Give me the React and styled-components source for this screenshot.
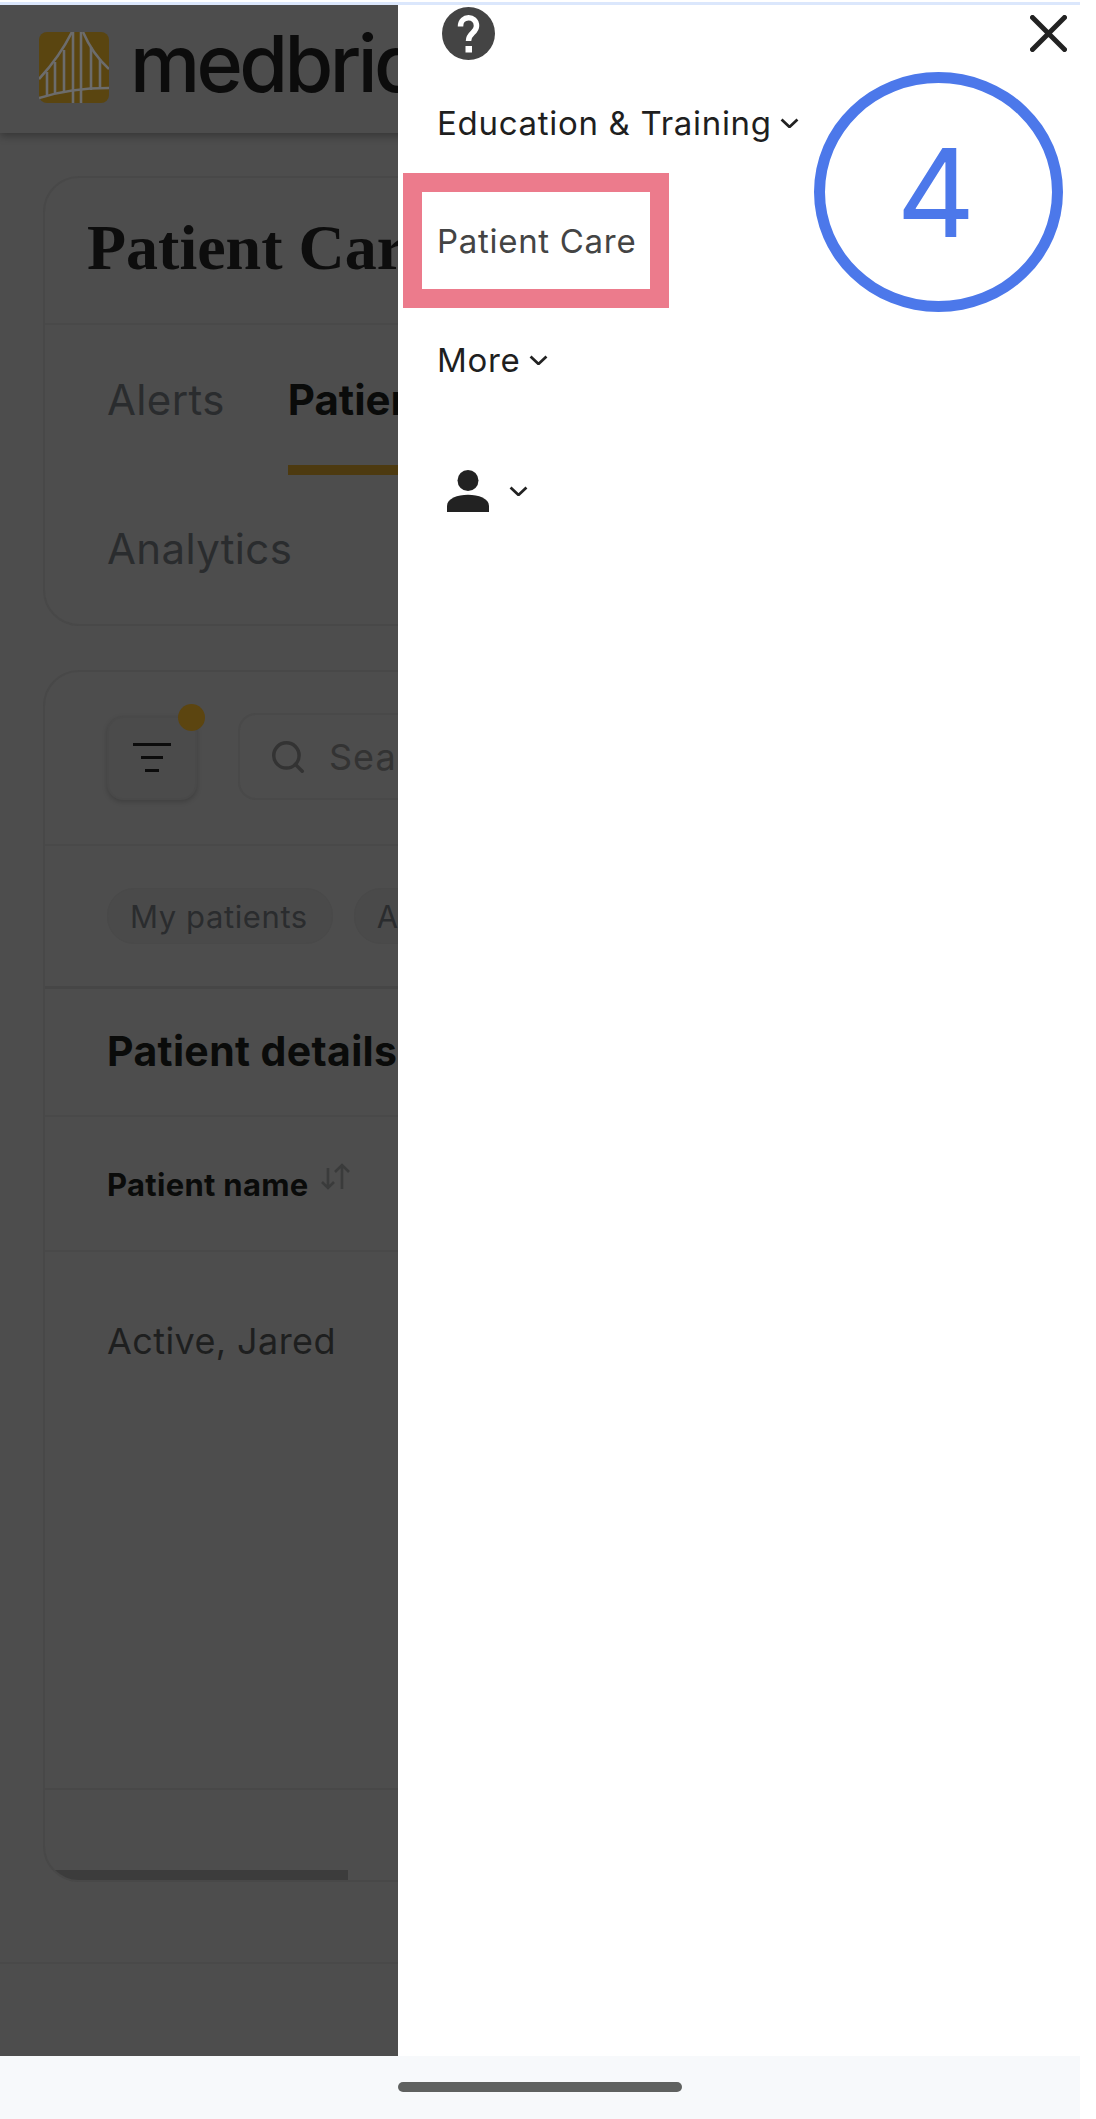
import React from "react";
import styled, { createGlobalStyle } from "styled-components";
import { Search } from "lucide-react";

const GlobalStyle = createGlobalStyle`
  html, body {
    margin: 0;
    padding: 0;
    background: #ffffff;
    font-family: Inter, "Liberation Sans", sans-serif;
  }
`;

const Frame = styled.div`
  width: 1080px;
  height: 2119px;
  padding-top: 2px;
  box-sizing: border-box;
  display: flex;
  flex-direction: column;
  background: #ffffff;
`;

const StatusLine = styled.div`
  height: 3px;
  flex: none;
  background: #dbe7fc;
`;

const Screen = styled.div`
  flex: 1;
  min-height: 0;
  display: grid;
  grid-template-columns: 398px 682px;
`;

const HomeBar = styled.div`
  height: 63px;
  flex: none;
  background: #f7f9fb;
  display: flex;
  justify-content: center;
  padding-top: 26px;
  box-sizing: border-box;
`;

const HomeHandle = styled.div`
  width: 284px;
  height: 10px;
  border-radius: 5px;
  background: #5f6160;
`;

/* page behind the open menu, already dimmed */
const Backdrop = styled.div`
  background: #4d4d4d;
  overflow: hidden;
  display: flex;
  flex-direction: column;
`;

const TopBar = styled.header`
  height: 128px;
  flex: none;
  box-sizing: border-box;
  padding: 27px 0 0 39px;
  display: flex;
  gap: 21px;
  width: 900px;
  box-shadow: 0 3px 8px rgba(0, 0, 0, 0.3);
`;

const Wordmark = styled.span`
  margin-top: -3px;
  font-size: 79px;
  font-weight: 500;
  line-height: 68px;
  letter-spacing: -3.6px;
  color: #0c0c0c;
`;

const Main = styled.main`
  flex: 1;
  width: 900px;
  padding: 43px 0 0 43px;
  box-sizing: border-box;
  display: flex;
  flex-direction: column;
  gap: 44px;
`;

const Card = styled.section`
  position: relative;
  width: 855px;
  box-sizing: border-box;
  border: 2px solid #484848;
  border-radius: 36px;
  overflow: hidden;
`;

const TitleRow = styled.div`
  height: 147px;
  box-sizing: border-box;
  padding: 0 0 6px 42px;
  display: flex;
  align-items: center;
  border-bottom: 2px solid #494949;
`;

const Title = styled.h1`
  margin: 0;
  font-family: "Liberation Serif", serif;
  font-size: 64px;
  font-weight: 700;
  color: #0d0d0d;
  white-space: nowrap;
`;

const TabRow = styled.div`
  height: ${(p) => p.$height}px;
  padding-left: 62px;
  display: flex;
  gap: 63px;
`;

const Tab = styled.div`
  box-sizing: border-box;
  padding-top: 8px;
  display: flex;
  align-items: center;
  font-size: 42px;
  letter-spacing: ${(p) => (p.$active ? "0" : "0.35px")};
  font-weight: ${(p) => (p.$active ? 700 : 400)};
  color: ${(p) => (p.$active ? "#0a0b0a" : "#2a2c2e")};
  border-bottom: 10px solid ${(p) => (p.$active ? "#4d3a10" : "transparent")};
  white-space: nowrap;
`;

const Toolbar = styled.div`
  height: 174px;
  box-sizing: border-box;
  padding: 41px 0 0 62px;
  display: flex;
  align-items: flex-start;
  gap: 41px;
  border-bottom: 2px solid #494949;
`;

const FilterButton = styled.div`
  position: relative;
  width: 90px;
  height: 84px;
  margin-top: 3px;
  border-radius: 16px;
  background: #4b4b4b;
  border: 2px solid #494949;
  box-sizing: border-box;
  box-shadow: 0 2px 5px rgba(0, 0, 0, 0.18);
  display: flex;
  align-items: center;
  justify-content: center;
`;

const FilterDot = styled.span`
  position: absolute;
  top: -14px;
  right: -10px;
  width: 27px;
  height: 27px;
  border-radius: 50%;
  background: #5c4510;
`;

const SearchBox = styled.div`
  width: 500px;
  height: 87px;
  box-sizing: border-box;
  border: 2px solid #494949;
  border-radius: 18px;
  padding-left: 29px;
  display: flex;
  align-items: center;
  gap: 22px;
  color: #333333;
  font-size: 36px;
  letter-spacing: 1px;
`;

const ChipRow = styled.div`
  height: 143px;
  box-sizing: border-box;
  padding-left: 62px;
  display: flex;
  align-items: center;
  gap: 21px;
  border-bottom: 3px solid #464646;
`;

const Chip = styled.span`
  height: 54px;
  padding: 0 24px 0 22px;
  border-radius: 27px;
  background: #4a4a4a;
  border: 1px solid #494949;
  display: flex;
  align-items: center;
  font-size: 31px;
  letter-spacing: 0.6px;
  color: #2a2c2e;
`;

const DetailsRow = styled.div`
  height: 128px;
  box-sizing: border-box;
  padding: 0 0 3px 62px;
  display: flex;
  align-items: center;
  border-bottom: 2px solid #494949;
  font-size: 41px;
  font-weight: 700;
  letter-spacing: 0.35px;
  color: #0a0b0a;
`;

const HeadRow = styled.div`
  height: 135px;
  box-sizing: border-box;
  padding: 1px 0 0 62px;
  display: flex;
  align-items: center;
  gap: 10px;
  border-bottom: 2px solid #494949;
  font-size: 31px;
  font-weight: 700;
  letter-spacing: 0.3px;
  color: #0a0b0a;
`;

const SortMark = styled.svg`
  width: 32px;
  height: 32px;
  margin-bottom: 12px;
`;

const BodyRow = styled.div`
  height: 538px;
  box-sizing: border-box;
  padding: 68px 0 0 62px;
  border-bottom: 2px solid #484848;
  font-size: 36px;
  line-height: 42px;
  letter-spacing: 0.4px;
  color: #1e1f1f;
`;

const CardFoot = styled.div`
  height: 90px;
`;

const ScrollThumb = styled.div`
  position: absolute;
  left: 0;
  bottom: 0;
  width: 303px;
  height: 10px;
  background: #3c3c3c;
`;

const PageFoot = styled.footer`
  height: 92px;
  flex: none;
  border-top: 2px solid #494949;
`;

/* the open menu */
const Drawer = styled.nav`
  position: relative;
  background: #ffffff;
  padding: 2px 13px 0 39px;
  display: flex;
  flex-direction: column;
  align-items: flex-start;
`;

const DrawerHead = styled.div`
  align-self: stretch;
  height: 52px;
  padding-left: 5px;
  display: flex;
  justify-content: space-between;
`;

const CloseIcon = styled.svg`
  width: 37px;
  height: 37px;
  margin-top: 8px;
`;

const NavItem = styled.a`
  display: flex;
  align-items: center;
  height: 44px;
  margin-top: ${(p) => p.$gap}px;
  font-size: 33px;
  letter-spacing: 0.7px;
  color: #1f1f1f;
  gap: 8px;
  white-space: nowrap;
`;

const HighlightedItem = styled.a`
  margin: 28px 0 0 -34px;
  width: 266px;
  height: 135px;
  box-sizing: border-box;
  border: 19px solid #ec7b8c;
  padding-left: 15px;
  display: flex;
  align-items: center;
  font-size: 33px;
  letter-spacing: 0.7px;
  color: #444444;
  white-space: nowrap;
`;

const AccountRow = styled.div`
  display: flex;
  align-items: center;
  gap: 20px;
  margin: 88px 0 0 10px;
`;

const StepBadge = styled.div`
  position: absolute;
  left: 416px;
  top: 67px;
  width: 249px;
  height: 240px;
  box-sizing: border-box;
  border: 11px solid #4c78ea;
  border-radius: 50%;
  padding-right: 5px;
  display: flex;
  align-items: center;
  justify-content: center;
  font-size: 122px;
  font-weight: 400;
  color: #4c78ea;
`;

const Chevron = ({ size = 19 }) => (
  <svg width={size} height={size * 0.55} viewBox="0 0 19 10.5" fill="none">
    <path d="M1.5 1.5 L9.5 9 L17.5 1.5" stroke="#222222" strokeWidth="2.8" />
  </svg>
);

const BridgeLogo = () => (
  <svg width="70" height="71" viewBox="0 0 70 71">
    <rect width="70" height="71" rx="8" fill="#5a4510" />
    <g fill="none" stroke="#6c6c6c" strokeWidth="2.6">
      <path d="M0 47 C 14 32, 25 16, 33 0" />
      <path d="M44 0 C 50 14, 60 28, 70 37" />
      <path d="M0 66 C 22 59, 46 56, 70 56" />
      <path d="M34 0 V71 M42 0 V71" />
      <path d="M8 40 V64 M16 30 V62 M25 18 V60 M52 15 V58 M61 27 V57" />
    </g>
  </svg>
);

const HelpIcon = () => (
  <svg width="53" height="53" viewBox="0 0 53 53">
    <circle cx="26.5" cy="26.5" r="26.5" fill="#444444" />
    <path
      d="M18.5 19.5 C 18.5 8, 34.5 8, 34.5 19 C 34.5 26, 26.5 25.5, 26.5 34"
      fill="none"
      stroke="#ffffff"
      strokeWidth="5.5"
    />
    <rect x="23.5" y="39" width="6.5" height="6.5" fill="#ffffff" />
  </svg>
);

const PersonIcon = () => (
  <svg width="42" height="42" viewBox="0 0 42 42">
    <circle cx="21" cy="10.5" r="10.5" fill="#222222" />
    <path d="M0 42 V36 C 0 21, 42 21, 42 36 V42 Z" fill="#222222" />
  </svg>
);

const FilterIcon = () => (
  <svg width="38" height="30" viewBox="0 0 38 30">
    <path
      d="M0 1.5 H38 M8 14.5 H30 M12 27.5 H26"
      stroke="#0c0c0c"
      strokeWidth="3"
    />
  </svg>
);

const SortIcon = () => (
  <SortMark viewBox="0 0 32 32" fill="none" stroke="#3a3b3b" strokeWidth="2.6">
    <path d="M9 6 V26 M3 20 L9 26 L15 20" />
    <path d="M23 27 V3 M16 10 L23 3 L30 10" />
  </SortMark>
);

export default function App() {
  return (
    <Frame>
      <GlobalStyle />
      <StatusLine />
      <Screen>
        <Backdrop>
          <TopBar>
            <BridgeLogo />
            <Wordmark>medbridge</Wordmark>
          </TopBar>
          <Main>
            <Card>
              <TitleRow>
                <Title>Patient Care</Title>
              </TitleRow>
              <TabRow $height={150}>
                <Tab>Alerts</Tab>
                <Tab $active>Patients</Tab>
              </TabRow>
              <TabRow $height={149}>
                <Tab>Analytics</Tab>
              </TabRow>
            </Card>
            <Card>
              <Toolbar>
                <FilterButton>
                  <FilterIcon />
                  <FilterDot />
                </FilterButton>
                <SearchBox>
                  <Search size={38} strokeWidth={2.2} color="#333333" />
                  Search
                </SearchBox>
              </Toolbar>
              <ChipRow>
                <Chip>My patients</Chip>
                <Chip>Active</Chip>
              </ChipRow>
              <DetailsRow>Patient details</DetailsRow>
              <HeadRow>
                Patient name
                <SortIcon />
              </HeadRow>
              <BodyRow>Active, Jared</BodyRow>
              <CardFoot />
              <ScrollThumb />
            </Card>
          </Main>
          <PageFoot />
        </Backdrop>
        <Drawer>
          <DrawerHead>
            <HelpIcon />
            <CloseIcon viewBox="0 0 37 37" fill="none" stroke="#222222" strokeWidth="5" strokeLinecap="round">
              <path d="M2.5 2.5 L34.5 34.5 M34.5 2.5 L2.5 34.5" />
            </CloseIcon>
          </DrawerHead>
          <NavItem $gap={42}>
            Education &amp; Training <Chevron />
          </NavItem>
          <HighlightedItem>Patient Care</HighlightedItem>
          <NavItem $gap={30}>
            More <Chevron />
          </NavItem>
          <AccountRow>
            <PersonIcon />
            <Chevron />
          </AccountRow>
          <StepBadge>4</StepBadge>
        </Drawer>
      </Screen>
      <HomeBar>
        <HomeHandle />
      </HomeBar>
    </Frame>
  );
}
